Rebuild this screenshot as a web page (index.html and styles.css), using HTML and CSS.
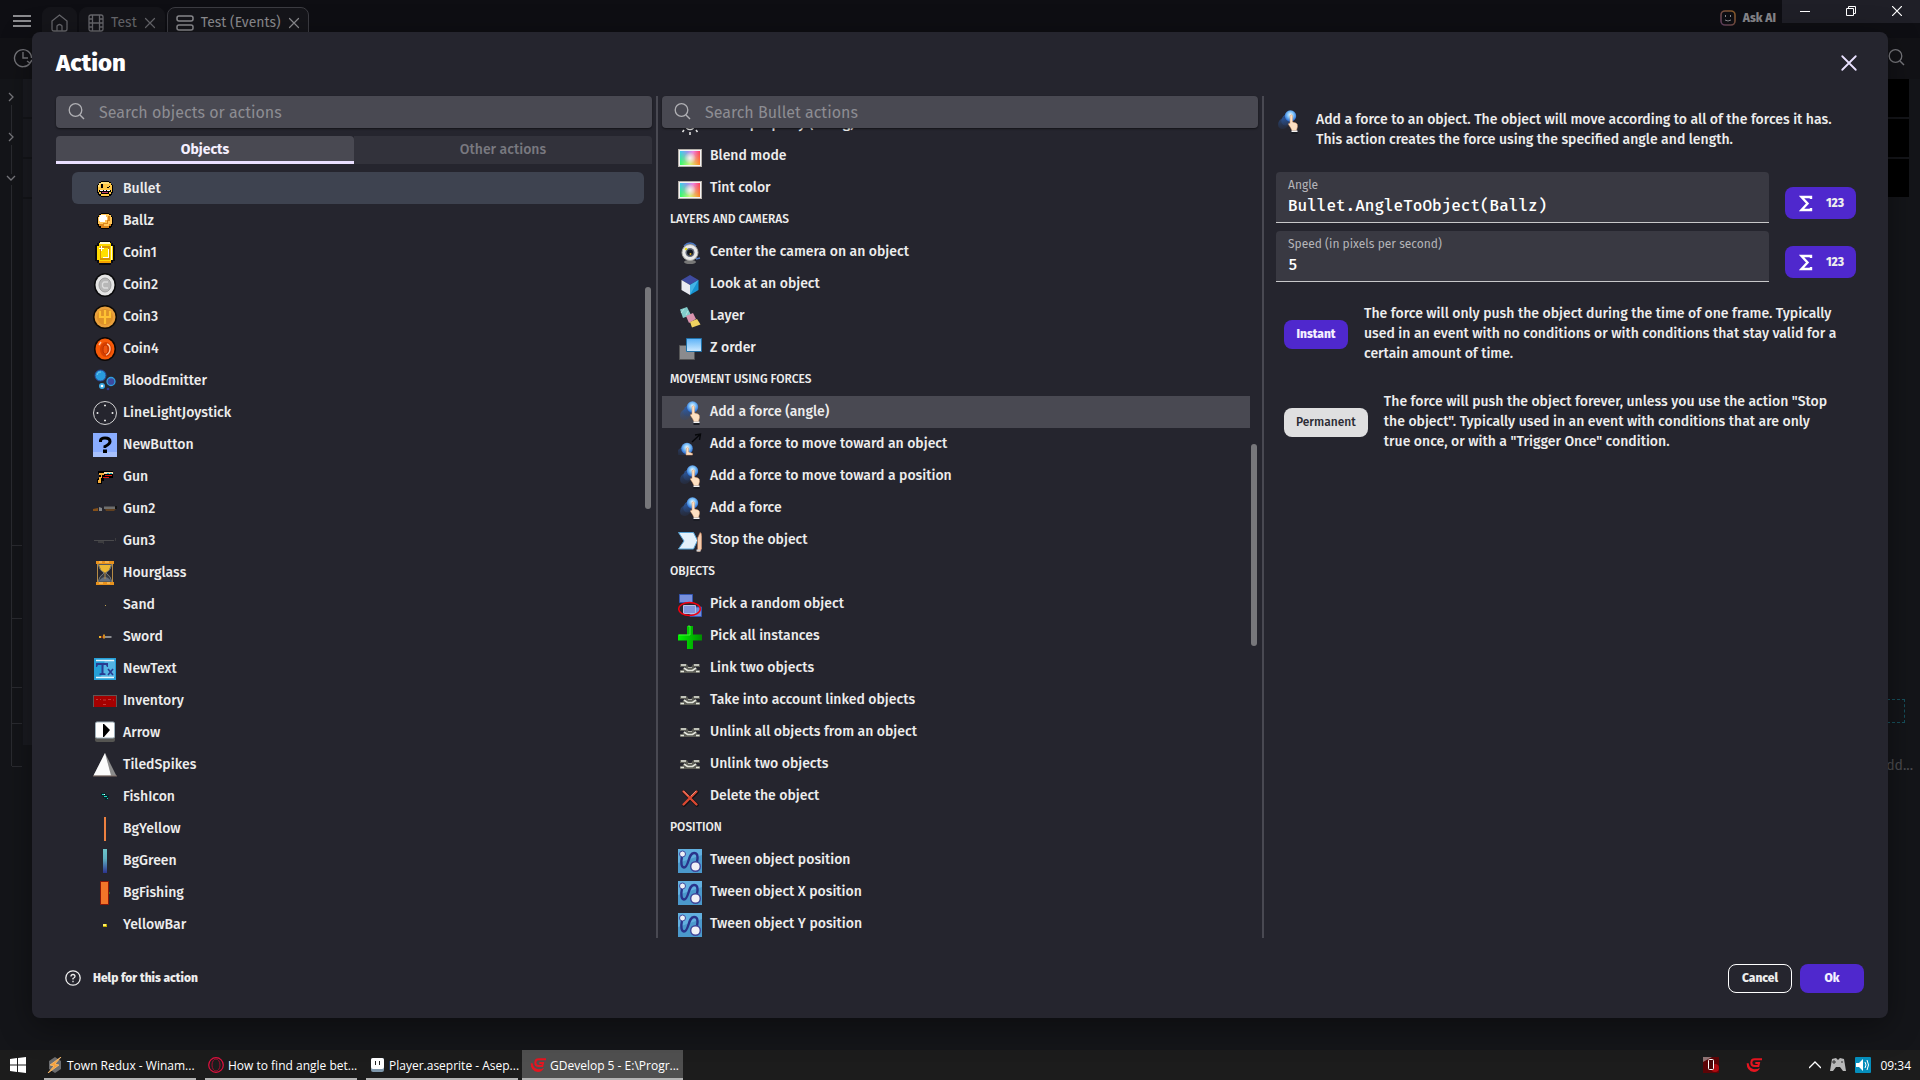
FILE: index.html
```html
<!DOCTYPE html>
<html lang="en">
<head>
  <meta charset="UTF-8" />
  <title>GDevelop 5 - Action</title>
  <link rel="stylesheet" href="styles.css">
</head>
<body>

  <!-- shared icons -->
  <svg class="sprites" aria-hidden="true">
    <defs>
      <radialGradient id="ball" cx="50%" cy="40%" r="60%"><stop offset="0" stop-color="#f2fbff"/><stop offset=".45" stop-color="#7fc2f8"/><stop offset="1" stop-color="#1f62cf"/></radialGradient>
      <linearGradient id="trail" x1="0" y1="1" x2="1" y2="0"><stop offset="0" stop-color="#27406e" stop-opacity=".2"/><stop offset="1" stop-color="#2f68be"/></linearGradient>
      <linearGradient id="hue"><stop offset="0" stop-color="#3fc8ff"/><stop offset=".35" stop-color="#8d8cff"/><stop offset=".65" stop-color="#f077f5"/><stop offset="1" stop-color="#ff3560"/></linearGradient>
      <linearGradient id="hue2"><stop offset="0" stop-color="#2dff5a"/><stop offset=".5" stop-color="#d5ff70"/><stop offset="1" stop-color="#ff8a1f"/></linearGradient>
      <linearGradient id="fade" x1="0" y1="0" x2="0" y2="1"><stop offset=".2" stop-color="#000"/><stop offset=".85" stop-color="#fff"/></linearGradient>
      <mask id="hueMask"><rect width="24" height="24" fill="url(#fade)"/></mask>
      <radialGradient id="glow"><stop offset="0" stop-color="#fff" stop-opacity=".8"/><stop offset="1" stop-color="#fff" stop-opacity="0"/></radialGradient>
      <linearGradient id="green"><stop offset="0" stop-color="#00f400"/><stop offset="1" stop-color="#008c00"/></linearGradient>
      <linearGradient id="sky" x1="0" y1="0" x2="0" y2="1"><stop offset="0" stop-color="#5cb2f7"/><stop offset="1" stop-color="#d0ebff"/></linearGradient>
      <linearGradient id="sea" x1="0" y1="0" x2="0" y2="1"><stop offset="0" stop-color="#6cc4c8"/><stop offset=".4" stop-color="#5fb0c0"/><stop offset="1" stop-color="#2c338f"/></linearGradient>
      <linearGradient id="aiRing" x1="0" y1="1" x2="1" y2="0"><stop offset="0" stop-color="#5d3e62"/><stop offset="1" stop-color="#8a5a24"/></linearGradient>
    </defs>
    <symbol id="i-search" viewBox="0 0 18 18"><circle cx="7.500" cy="7" r="6.300" fill="none" stroke="currentColor" stroke-width="1.300"/><path d="M12 12l4 4" stroke="currentColor" stroke-width="1.400"/></symbol>
    <symbol id="i-close" viewBox="0 0 16 16"><path d="M2 2l12 12M14 2L2 14" stroke="currentColor" stroke-width="1.600" stroke-linecap="round"/></symbol>
    <symbol id="i-force" viewBox="0 0 24 24"><ellipse cx="7.500" cy="13.500" rx="6" ry="5" fill="url(#trail)" opacity=".6" transform="rotate(-50 7.500 13.500)"/><ellipse cx="11" cy="9.500" rx="6.500" ry="5" fill="url(#trail)" transform="rotate(-50 11 9.500)"/><circle cx="14.500" cy="6" r="5.700" fill="url(#ball)"/><path d="M14 5.500q1.500-1.500 2.500 0V12l3.500 1q1.800.8 1.500 3.500l-1 4h-4.500l-1.500-3-2-3q0-2 1.500-1z" fill="#fde0c2" stroke="#d99a6c" stroke-width=".5"/><path d="M15.500 20.500h6V22h-6z" fill="#f2f2f2"/><path d="M15.500 22h6v2h-6z" fill="#1b1d24"/></symbol>
    <symbol id="i-toward" viewBox="0 0 24 24"><path d="M0 22v-5l5-4 8 7v2z" fill="url(#trail)"/><circle cx="9" cy="15.500" r="5.800" fill="url(#ball)"/><path d="M8.500 15q1-1.200 2 0v4l4 1.500V22H8z" fill="#fde0c2" stroke="#d99a6c" stroke-width=".5"/><path d="M14 9L22 1.500M17 2l5.500-1-1 6" fill="none" stroke="#06070a" stroke-width="1.400"/></symbol>
    <symbol id="i-stop" viewBox="0 0 24 24"><path d="M.5 3.500h15l4 8-4 8.500H.5l5.500-8z" fill="#e3f1fa" stroke="#55a1d2"/><path d="M19.500 20V9l2.500-5.500q1.800 0 1.800 4v12l-1.800 3h-2.500z" fill="#f6cbaa" stroke="#9c6141" stroke-width=".6"/><path d="M18.500 20.500h4v2h-4z" fill="#d5d5d5"/></symbol>
    <symbol id="i-color" viewBox="0 0 24 24"><rect x=".5" y="4.500" width="23" height="17" fill="#f3f3f3" stroke="#b5b0aa"/><rect x="2" y="6" width="20" height="14" fill="url(#hue)"/><rect x="2" y="6" width="20" height="14" fill="url(#hue2)" mask="url(#hueMask)"/><circle cx="12" cy="13" r="6" fill="url(#glow)"/></symbol>
    <symbol id="i-link" viewBox="0 0 24 24"><path d="M2 8.500h6l2 3h4l2-3h6M2 14.500h5M17 14.500h5M5 12l4 2.500h6l4-2.500" fill="none" stroke="#5b5c55" stroke-width="3"/><path d="M3 8h5M16 8h5M2.500 14.500H6M18 14.500h3.500M6 11l3.500 2.500h5L18 11" fill="none" stroke="#e3e5db" stroke-width="1.700"/><path d="M10 10.500h4" stroke="#b4b5a9"/></symbol>
    <symbol id="i-tween" viewBox="0 0 24 24"><path d="M0 0h24v24H0z" fill="#62b0e0"/><path d="M0 24V14L24 6v18z" fill="#4b99cc"/><path d="M4 7q-2 11 2 11.500C11 18.500 10 4 16 4q5 0 3 9" fill="none" stroke="#29338a" stroke-width="2.400"/><circle cx="4.500" cy="5" r="3" fill="#eef0f6" stroke="#3a489d"/><circle cx="17.500" cy="17.500" r="4.800" fill="#f0f1f6" stroke="#3d4599" stroke-width="1.400"/></symbol>
    <symbol id="i-gd" viewBox="0 0 24 24"><path d="M24 3.500H13q-5 0-5 5t5 5h5.500l1-4.500H14" fill="none" stroke="currentColor" stroke-width="3"/><path d="M1 9.500h3q1 8 8 9 6 0 9-2.500-3 6.500-9 6.500Q1 21.500 1 9.500z" fill="currentColor"/></symbol>
  </svg>

  <div class="app">
    <header class="titlebar">
      <button class="menu-btn" aria-label="Menu"><svg width="18" height="14" viewBox="0 0 18 14"><path d="M0 2h18M0 7h18M0 12h18" stroke="currentColor" stroke-width="2"/></svg></button>
      <nav class="tabs">
        <a href="#home" class="tab tab-home" aria-label="Home"><svg width="17" height="18" viewBox="0 0 17 18"><path d="M1 7l7.500-6L16 7v8q0 2-2 2H3q-2 0-2-2zM6 17v-5q2.500-3 5 0v5" fill="none" stroke="currentColor" stroke-width="1.300"/></svg></a>
        <a href="#test" class="tab"><svg width="16" height="18" viewBox="0 0 16 18"><path d="M1 3q0-2 2-2h10q2 0 2 2v12q0 2-2 2H3q-2 0-2-2zM4.500 1v16M11.500 1v16M4.500 9h7M1 5h3.500M1 9h3.500M1 13h3.500M11.500 5H15M11.500 9H15M11.500 13H15" fill="none" stroke="currentColor" stroke-width="1.300"/></svg>Test <svg width="12" height="12"><use href="#i-close"/></svg></a>
        <a href="#events" class="tab active"><svg width="18" height="16" viewBox="0 0 18 16"><rect x="1" y="1" width="16" height="5" rx="2" fill="none" stroke="currentColor" stroke-width="1.500"/><rect x="1" y="10" width="16" height="5" rx="2" fill="none" stroke="currentColor" stroke-width="1.500"/></svg>Test (Events) <svg width="12" height="12"><use href="#i-close"/></svg></a>
      </nav>
      <button class="ask-ai"><svg width="16" height="16" viewBox="0 0 16 16"><rect x="1" y="1" width="14" height="14" rx="4" fill="none" stroke="url(#aiRing)" stroke-width="1.600"/><path d="M5.500 5v2M10.500 5v2M5 10q3 2 6 0" fill="none" stroke="#8a8a90"/></svg>Ask AI</button>
      <div class="window-buttons">
        <button aria-label="Minimize"><svg width="10" height="10"><path d="M0 5.500h10" stroke="#fff"/></svg></button>
        <button aria-label="Restore"><svg width="10" height="10"><path d="M.5 2.500h7v7h-7zM2.500 2.500v-2h7v7h-2" fill="none" stroke="#fff"/></svg></button>
        <button aria-label="Close window"><svg width="10" height="10"><path d="M0 0l10 10M10 0L0 10" stroke="#fff" stroke-width="1.200"/></svg></button>
      </div>
    </header>
    <div class="toolbar">
      <svg width="20" height="20" viewBox="0 0 20 20"><path d="M17 15a8.500 8.500 0 1 1 1.500-5M10 4v6h5M14 13l3 2 2-3" fill="none" stroke="currentColor" stroke-width="1.400"/></svg>
      <svg width="18" height="18"><use href="#i-search"/></svg>
    </div>
    <div class="events-sheet">
      <svg class="event-tree" width="23" height="700" viewBox="0 0 23 700" fill="none">
        <path d="M11.500 26v29M11.500 66v29M11.500 106v581M12 466.500h10M12 539.500h10M12 608.500h10M12 644.500h10M12 687.500h10" stroke="#2a2b30"/>
        <path d="M9 14l4 4-4 4M9 54l4 4-4 4M7 97l4 4 4-4" stroke="#77777c" stroke-width="1.300"/>
      </svg>
      <div class="event-blocks"><div></div><div></div><div></div><div></div></div>
      <div class="event-actions">
        <div class="black"></div><div class="black"></div><div class="black"></div>
        <div class="dashed"></div>
        <span>dd...</span>
      </div>
    </div>

    <section class="dialog" role="dialog" aria-labelledby="dialogTitle">
      <div class="dialog-head">
        <h1 id="dialogTitle">Action</h1>
        <button class="dialog-close" aria-label="Close"><svg width="18" height="18"><use href="#i-close"/></svg></button>
      </div>

      <div class="columns">
        <div class="column objects-column">
          <label class="search"><svg width="18" height="18"><use href="#i-search"/></svg><input type="text" placeholder="Search objects or actions" aria-label="Search objects or actions"></label>
          <div class="switch">
            <button class="active">Objects</button>
            <button>Other actions</button>
          </div>
          <div class="scroll-area">
            <ul class="object-list">
              <li><button class="row selected"><svg viewBox="0 0 24 24" shape-rendering="crispEdges"><path d="M8 4h8v1h2v2h1v1h1v8h-1v2h-1v1h-2v1H8v-1H6v-1H5v-2H4V8h1V7h1V5h2z" fill="#000"/><path d="M8 5h8v1h2v2h1v7h-1v2h-2v2H8v-2H6v-2H5V8h1V6h2z" fill="#ffc846"/><path d="M8 5h8v2H7v3H5V8h1V6h2z" fill="#ffdf7b"/><path d="M8 7h2v4H8zM14 10h2v1h-2zM16 9h1v1h-1zM6 13h12v2h-2v2H8v-2H6z" fill="#000"/><path d="M7 13h3v1H7zM11 13h2v1h-2zM14 13h3v1h-3z" fill="#fff"/><path d="M9 15h6v1H9z" fill="#c33d70"/></svg>Bullet</button></li>
              <li><button class="row"><svg viewBox="0 0 24 24" shape-rendering="crispEdges"><path d="M8 4h8v1h2v2h1v1h1v8h-1v2h-1v1h-2v1H8v-1H6v-1H5v-2H4V8h1V7h1V5h2z" fill="#000"/><path d="M8 5h8v1h2v2h1v7h-1v2h-2v2H8v-2H6v-2H5V8h1V6h2z" fill="#ffc558"/><path d="M15 7h2v5h-2v3h-4v2h5v-2h2v2h-2v2H8v-2H6v-2h4v-1h4v-3h1z" fill="#d9841c"/><path d="M7 6h6v2h1v3h-2v2H7v-1H6V8h1z" fill="#fff"/></svg>Ballz</button></li>
              <li><button class="row"><svg viewBox="0 0 24 24" shape-rendering="crispEdges"><path d="M6 0h12v2h2v2h2v16h-2v2h-2v2H6v-2H4v-2H2V4h2V2h2z" fill="#0b0b10"/><path d="M6 2h12v3h2v14h-2v3H6v-3H4V5h2z" fill="#ffd900"/><path d="M7 1h10v2H7zM18 5h1v14h-1z" fill="#fff9d0"/><path d="M7 5h10v14H7z" fill="#d89500"/><path d="M8 7h7v10H8z" fill="#ffe000"/><path d="M15 8h1v9h-6v-1h5zM8 5h1v2h2v1H9v2H8V8H6V7h2z" fill="#fff"/><path d="M6 20h12v2H6z" fill="#f5a000"/></svg>Coin1</button></li>
              <li><button class="row"><svg viewBox="0 0 24 24"><ellipse cx="12" cy="12" rx="11" ry="12" fill="#09090b"/><ellipse cx="12" cy="12" rx="9.500" ry="10.500" fill="#e5e5e5"/><ellipse cx="12" cy="12" rx="6" ry="7" fill="#b7b7b7" stroke="#a0a0a0"/><path d="M15 9h-4l-1.500 1.500v3L11 15h4" fill="none" stroke="#dcdcdc" stroke-width="1.300"/></svg>Coin2</button></li>
              <li><button class="row"><svg viewBox="0 0 24 24"><circle cx="12" cy="12" r="12" fill="#0c0a07"/><circle cx="12" cy="12" r="10.500" fill="#e9a03c"/><circle cx="12" cy="12" r="8" fill="#de9229"/><path d="M7 6v6h10V6M12 5v14" fill="none" stroke="#ffc233" stroke-width="2.200"/></svg>Coin3</button></li>
              <li><button class="row"><svg viewBox="0 0 24 24"><ellipse cx="12" cy="12" rx="11" ry="12" fill="#0c0705"/><ellipse cx="12" cy="12" rx="9.500" ry="10.500" fill="#f65a08"/><ellipse cx="13" cy="12.500" rx="6" ry="7.500" fill="#d84000"/><path d="M14 7q3 1 3 5t-4 6M8 5L6 8" fill="none" stroke="#ffc3a0" stroke-width="1.400"/><ellipse cx="12.500" cy="12.500" rx="2.500" ry="4.500" fill="#f0550f" stroke="#b83200"/></svg>Coin4</button></li>
              <li><button class="row"><svg viewBox="0 0 24 24"><circle cx="7.500" cy="6.500" r="5.500" fill="#299bdc" stroke="#294696"/><path d="M4 6q1-4 4-3" stroke="#75c8ef" fill="none"/><circle cx="18" cy="12.500" r="4" fill="#3b4a9f" stroke="#2f9ddf" stroke-width="1.300"/><circle cx="9" cy="17" r="3" fill="#3aa6e0"/><circle cx="9" cy="17" r="1.300" fill="#fff"/><circle cx="15" cy="20" r="1.300" fill="#29368e"/></svg>BloodEmitter</button></li>
              <li><button class="row"><svg viewBox="0 0 24 24"><circle cx="12" cy="12" r="11.500" fill="none" stroke="#d2d2d3"/><path d="M11 4.500h2M11 19.500h2M4.500 11v2M19.500 11v2" stroke="#ddd" stroke-width="1.600"/></svg>LineLightJoystick</button></li>
              <li><button class="row"><svg viewBox="0 0 24 24"><path d="M0 0h24v24H0z" fill="#8aadff"/><path d="M0 19h24v5H0z" fill="#a8c1fc"/><path d="M7.500 9V7.500Q8 5 12 5q5 0 5 3.500 0 2.500-5 5V15" fill="none" stroke="#000" stroke-width="3"/><path d="M10 16.500h4V20h-4z" fill="#000"/></svg>NewButton</button></li>
              <li><button class="row"><svg viewBox="0 0 24 24" shape-rendering="crispEdges"><path d="M5 6h15v7h-9v3H9v3H4v-5l2-2z" fill="#000"/><path d="M6 8h5v2H9v3H8v5H5v-3h1v-3h2v-2H6z" fill="#f7ad3a"/><path d="M11 7h9v2h-9z" fill="#f8dba5"/><path d="M14 8h2v1h-2zM17 8h2v1h-2z" fill="#16b8c8"/><path d="M12 10h7v1h-7zM10 12h6v1h-6z" fill="#e31a0d"/></svg>Gun</button></li>
              <li><button class="row"><svg viewBox="0 0 24 24"><path d="M0 12l5-1v3H0z" fill="#865018"/><path d="M6 10l3 1v3H6z" fill="#85888b"/><path d="M11 9.500h11V12H11z" fill="#6e6e6d"/><path d="M12 12h11l-2 2h-8z" fill="#61401f"/><path d="M22 9h2v3h-2z" fill="#111"/></svg>Gun2</button></li>
              <li><button class="row"><svg viewBox="0 0 24 24"><path d="M1 11h20v1H1z" fill="#4a4a4c"/><path d="M5 12h5v2H5zM10 12h1v3h-1zM22 9h1v3h-1z" fill="#3c3c3f"/></svg>Gun3</button></li>
              <li><button class="row"><svg viewBox="0 0 24 24"><path d="M5 3h14q-1 6-6 9 5 3 6 9H5q1-6 6-9-5-3-6-9z" fill="#363c46" stroke="#929690" stroke-width=".7"/><path d="M6 4h12l-2 5-4 3-4-3z" fill="#edb834"/><path d="M6 20q6-8 12 0z" fill="#66707d"/><path d="M4.500 3v18M19.500 3v18M12 12v6" stroke="#b78b44"/><path d="M3 0h18v3H3zM3 21h18v3H3z" fill="#e8921d"/><path d="M6 1h3M12 1h4M6 22h4M14 22h3" stroke="#ffd27c"/></svg>Hourglass</button></li>
              <li><button class="row"><svg viewBox="0 0 24 24"><path d="M12 12h1v1h-1z" fill="#c0a050"/></svg>Sand</button></li>
              <li><button class="row"><svg viewBox="0 0 24 24"><path d="M6 11h2v2H6z" fill="#efb42a"/><path d="M8 11h2v2H8z" fill="#7b311a"/><path d="M10 9.500h2v4h-2z" fill="#d48d20"/><path d="M12 11h6l1 1-1 1h-6z" fill="#8a8b8e"/></svg>Sword</button></li>
              <li><button class="row"><svg viewBox="0 0 24 24"><path d="M1 1h22v22H1z" fill="#259fd8"/><path d="M12 3h10v17H8z" fill="#54b4e3"/><path d="M3 3.500h18M3 20.500h18" stroke="#e7f5fc" stroke-width="1.500"/><path d="M3 6h12v4h-1l-1-2h-2.500v8l2 .5V18h-6v-1.500l2-.5V8H5l-1 2H3z" fill="#293c91"/><path d="M15 12l5 6M20 12l-5 6" stroke="#293c91" stroke-width="1.600"/></svg>NewText</button></li>
              <li><button class="row"><svg viewBox="0 0 24 24"><path d="M0 6h24v12H0z" fill="#5e5655"/><path d="M1 7h22v11H1z" fill="#a50000"/><path d="M3 10.500h2M7 10.500h1M10 11h3M15 10.500h3M20 11h1M10 15.500h3" stroke="#c03a3a"/></svg>Inventory</button></li>
              <li><button class="row"><svg viewBox="0 0 24 24"><rect x="2" y="2" width="20" height="19" rx="2" fill="#555552"/><rect x="2.500" y="1" width="19" height="16" rx="1.500" fill="#fff" stroke="#9fb0ba"/><path d="M10 3h1l6 6-6 7h-1z" fill="#000"/></svg>Arrow</button></li>
              <li><button class="row"><svg viewBox="0 0 24 24"><path d="M12 0L.5 23h23z" fill="#8b8b8b"/><path d="M12 0L.5 22.500H18z" fill="#fbfbfb"/><path d="M0 23h24" stroke="#806c65"/></svg>TiledSpikes</button></li>
              <li><button class="row"><svg viewBox="0 0 24 24" shape-rendering="crispEdges"><path d="M8 8h5v2h3v2h-1v3h-3v-2h-2v-2H8z" fill="#06262c"/><path d="M9 9h3v1H9zM11 11h3v1h-3zM14 13h1v1h-1z" fill="#21d9bc"/><path d="M11 9h1v1h-1z" fill="#e9ffff"/></svg>FishIcon</button></li>
              <li><button class="row"><svg viewBox="0 0 24 24"><path d="M11 0h2v24h-2z" fill="#ed8140"/></svg>BgYellow</button></li>
              <li><button class="row"><svg viewBox="0 0 24 24"><path d="M10 0h4v24h-4z" fill="url(#sea)"/></svg>BgGreen</button></li>
              <li><button class="row"><svg viewBox="0 0 24 24"><path d="M7.500.5h8v23h-8z" fill="#f37529" stroke="#8c1607"/><path d="M16 11h1v2h-1z" fill="#386c1d"/></svg>BgFishing</button></li>
              <li><button class="row"><svg viewBox="0 0 24 24"><path d="M10 11h4v3h-4z" fill="#c4ad00"/><path d="M10 11h3v2h-3z" fill="#fff263"/></svg>YellowBar</button></li>
            </ul>
            <div class="thumb thumb-objects"></div>
          </div>
        </div>

        <div class="column actions-column">
          <label class="search"><svg width="18" height="18"><use href="#i-search"/></svg><input type="text" placeholder="Search Bullet actions" aria-label="Search Bullet actions"></label>
          <div class="scroll-area">
            <div class="action-list">
              <button class="row"><svg viewBox="0 0 24 24"><circle cx="12" cy="12" r="4.500" fill="none" stroke="#e8e8e8" stroke-width="1.500"/><path d="M12 19v3M6 17l-1.500 2M18 17l1.500 2M12 2v3M2 12h3M19 12h3" stroke="#e8e8e8" stroke-width="1.500"/></svg>Effect property (string)</button>
              <button class="row"><svg><use href="#i-color"/></svg>Blend mode</button>
              <button class="row"><svg><use href="#i-color"/></svg>Tint color</button>
              <h2>Layers and cameras</h2>
              <button class="row"><svg viewBox="0 0 24 24"><ellipse cx="12" cy="21" rx="6" ry="2" fill="#777"/><path d="M18 18l4-1M6 5q6-6 12 0" fill="none" stroke="#4a78c4" stroke-width="1.500"/><circle cx="12" cy="11.500" r="8" fill="#e9e9e8" stroke="#a8a8a4"/><circle cx="12" cy="11.500" r="4.500" fill="#606776"/><circle cx="12" cy="11.500" r="3" fill="#121722"/><circle cx="12.500" cy="13" r="1" fill="#d1a41a"/><circle cx="8" cy="8" r="1.300" fill="#e7dc21"/></svg>Center the camera on an object</button>
              <button class="row"><svg viewBox="0 0 24 24"><path d="M12 2l8.500 5-8.500 5-8.500-5z" fill="#3f4ba0"/><path d="M3.500 7l8.500 5v10l-8.500-5z" fill="#e8eaf1"/><path d="M20.500 7L12 12v10l8.500-5z" fill="#1693d1"/><path d="M20.500 7L12 12v10z" fill="#44b4e6"/></svg>Look at an object</button>
              <button class="row"><svg viewBox="0 0 24 24"><path d="M2 4.500L9 2l4 8-8 3z" fill="#82cccb"/><path d="M8 11l7-3 3 6-7 4z" fill="#da93ae"/><path d="M12 17l7-3 3.500 5.500-8.500 3z" fill="#efd260"/><path d="M3 8l3-4M8 10l2-4" stroke="#b6e5df"/></svg>Layer</button>
              <button class="row"><svg viewBox="0 0 24 24"><path d="M1.500 8.500h15v14h-15z" fill="#8b8b8e" stroke="#565657"/><path d="M8.500 1.500h15v13h-15z" fill="url(#sky)" stroke="#2071a9"/></svg>Z order</button>
              <h2>Movement using forces</h2>
              <button class="row selected"><svg><use href="#i-force"/></svg>Add a force (angle)</button>
              <button class="row"><svg><use href="#i-toward"/></svg>Add a force to move toward an object</button>
              <button class="row"><svg><use href="#i-force"/></svg>Add a force to move toward a position</button>
              <button class="row"><svg><use href="#i-force"/></svg>Add a force</button>
              <button class="row"><svg><use href="#i-stop"/></svg>Stop the object</button>
              <h2>Objects</h2>
              <button class="row"><svg viewBox="0 0 24 24"><path d="M1.500 1.500h13v8h-13z" fill="#7890dc" stroke="#3557b2"/><path d="M12 14h11.500v9.500H12z" fill="#7290db" stroke="#3557b2"/><path d="M5.500 12.500h12v8h-12z" fill="#8296dc" stroke="#b4bfe7"/><ellipse cx="11.500" cy="16" rx="10.800" ry="6.500" fill="none" stroke="#f3000f" stroke-width="1.500"/></svg>Pick a random object</button>
              <button class="row"><svg viewBox="0 0 24 24"><path d="M9 1h6v8.500h9v6h-9V24H9v-8.500H0v-6h9z" fill="url(#green)"/><path d="M10 1h2v9H1" fill="none" stroke="#5dff4b" stroke-width=".7"/></svg>Pick all instances</button>
              <button class="row"><svg><use href="#i-link"/></svg>Link two objects</button>
              <button class="row"><svg><use href="#i-link"/></svg>Take into account linked objects</button>
              <button class="row"><svg><use href="#i-link"/></svg>Unlink all objects from an object</button>
              <button class="row"><svg><use href="#i-link"/></svg>Unlink two objects</button>
              <button class="row"><svg viewBox="0 0 24 24"><path d="M6 7l13 13M19 7L6 20" stroke="#0f1013" stroke-width="3.500" stroke-linecap="round"/><path d="M5.500 6.500l13 13M18.500 6.500l-13 13" stroke="#d94832" stroke-width="2.400" stroke-linecap="round"/><path d="M5.500 6l5 5M18 6l-5 5" stroke="#f6a08a" stroke-width=".8"/></svg>Delete the object</button>
              <h2>Position</h2>
              <button class="row"><svg><use href="#i-tween"/></svg>Tween object position</button>
              <button class="row"><svg><use href="#i-tween"/></svg>Tween object X position</button>
              <button class="row"><svg><use href="#i-tween"/></svg>Tween object Y position</button>
            </div>
            <div class="thumb thumb-actions"></div>
          </div>
        </div>

        <form class="parameters">
          <div class="description">
            <svg width="24" height="24"><use href="#i-force"/></svg>
            <p>Add a force to an object. The object will move according to all of the forces it has.<br>This action creates the force using the specified angle and length.</p>
          </div>
          <div class="param">
            <div class="field">
              <label for="angle">Angle</label>
              <input id="angle" type="text" value="Bullet.AngleToObject(Ballz)">
            </div>
            <button type="button" class="expression"><svg width="14" height="17" viewBox="0 0 14 17"><path d="M12 4V2H2.500l6 6.500-6 6.500H12v-2" fill="none" stroke="#fff" stroke-width="2.400"/></svg>123</button>
          </div>
          <div class="param">
            <div class="field">
              <label for="speed">Speed (in pixels per second)</label>
              <input id="speed" type="text" value="5">
            </div>
            <button type="button" class="expression"><svg width="14" height="17" viewBox="0 0 14 17"><path d="M12 4V2H2.500l6 6.500-6 6.500H12v-2" fill="none" stroke="#fff" stroke-width="2.400"/></svg>123</button>
          </div>
          <div class="force-type">
            <button type="button" class="btn primary">Instant</button>
            <p>The force will only push the object during the time of one frame. Typically<br>used in an event with no conditions or with conditions that stay valid for a<br>certain amount of time.</p>
          </div>
          <div class="force-type">
            <button type="button" class="btn light">Permanent</button>
            <p>The force will push the object forever, unless you use the action "Stop<br>the object". Typically used in an event with conditions that are only<br>true once, or with a "Trigger Once" condition.</p>
          </div>
        </form>
      </div>

      <div class="dialog-foot">
        <a class="help" href="#help"><svg width="16" height="16" viewBox="0 0 16 16"><circle cx="8" cy="8" r="7.200" fill="none" stroke="currentColor" stroke-width="1.300"/><path d="M6 6.500Q6 4.500 8 4.500t2 2Q10 7.500 8 8.500v1M8 10.800v1.400" fill="none" stroke="currentColor" stroke-width="1.300"/></svg>Help for this action</a>
        <button class="btn outline">Cancel</button>
        <button class="btn primary">Ok</button>
      </div>
    </section>
  </div>

  <footer class="taskbar">
    <button class="start" aria-label="Start"><svg width="16" height="16" viewBox="0 0 16 16"><path d="M0 2l7-1v6.500H0zM8 1l8-1v7.500H8zM0 8.500h7V15l-7-1zM8 8.500h8V16l-8-1z" fill="#fff"/></svg></button>
    <button class="task"><svg width="16" height="16" viewBox="0 0 16 16"><path d="M8 0l6 4v8l-6 4-6-4V4z" fill="#6d6e70"/><path d="M14 0L3 8l4 1-6 7 11-8-4-1z" fill="#f8a23c" stroke="#ffc070" stroke-width=".8"/></svg>Town Redux - Winam...</button>
    <button class="task"><svg width="16" height="16" viewBox="0 0 16 16"><circle cx="8" cy="8" r="7.300" fill="none" stroke="#e0113f" stroke-width="1.200"/><ellipse cx="8" cy="8" rx="4" ry="6" fill="none" stroke="#a00d30"/></svg>How to find angle bet...</button>
    <button class="task"><svg width="16" height="16" viewBox="0 0 16 16"><rect x="2" y="1" width="13" height="14" rx="2" fill="#7e97ab"/><rect x="2" y="1" width="13" height="11" rx="2" fill="#fff"/><path d="M6.500 4v4M10.500 4v4" stroke="#222"/></svg>Player.aseprite - Asep...</button>
    <button class="task active"><svg class="gd" width="16" height="16"><use href="#i-gd"/></svg>GDevelop 5 - E:\Progr...</button>
    <div class="tray">
      <svg width="16" height="16" viewBox="0 0 16 16"><path d="M0 0h16v16H0z" fill="#5c0406"/><path d="M0 0h9L0 5z" fill="#8f7474"/><circle cx="12" cy="11" r="4" fill="#b00a10"/><rect x="5.500" y="2.500" width="5" height="10" rx="1" fill="#4b0507" stroke="#fff"/></svg>
      <svg class="gd" width="16" height="16"><use href="#i-gd"/></svg>
      <svg width="12" height="8" viewBox="0 0 12 8"><path d="M0 7l6-6 6 6" fill="none" stroke="#fff" stroke-width="1.300"/></svg>
      <svg width="16" height="14" viewBox="0 0 16 14"><path d="M2 1l4-1 2 2 2-2 4 1 2 12h-3l-3-4H6l-3 4H0z" fill="#b8b8b8"/><path d="M4 2v4M2 4h4M11 4h2" stroke="#333"/></svg>
      <svg width="16" height="16" viewBox="0 0 16 16"><rect width="16" height="16" rx="1" fill="#058ebc"/><path d="M1 6h3l4-4v12l-4-4H1z" fill="#fff"/><path d="M10 5q2 3 0 6M12 3q3 5 0 10" fill="none" stroke="#fff"/></svg>
      <time>09:34</time>
    </div>
  </footer>

</body>
</html>
```
FILE: styles.css
```css
* {
  box-sizing: border-box;
}
body {
  margin: 0;
  height: 100vh;
  display: flex;
  flex-direction: column;
  overflow: hidden;
  background: #141519;
  color: #ededed;
  font-family: "Fira Sans", "Noto Sans", sans-serif;
  font-size: 14px;
}
h1, h2, p, ul {
  margin: 0;
  padding: 0;
}
ul {
  list-style: none;
}
button, input {
  font: inherit;
  color: inherit;
  border: 0;
  margin: 0;
  padding: 0;
  background: none;
}
a {
  color: inherit;
  text-decoration: none;
}
svg {
  flex: none;
  display: block;
}
.sprites {
  position: absolute;
  width: 0;
  height: 0;
}

/* editor behind the dialog */
.app {
  flex: 1;
  min-height: 0;
  position: relative;
  display: flex;
  flex-direction: column;
}
.titlebar {
  height: 38px;
  display: flex;
  align-items: flex-start;
  background: #0e0e13;
  color: #8b8b8f;
}
.menu-btn {
  padding: 14px 11px 0 13px;
}
.tabs {
  flex: 1;
  display: flex;
  gap: 2px;
  padding-top: 7px;
  color: #66666b;
}
.tab {
  height: 31px;
  padding: 0 8px;
  display: flex;
  align-items: center;
  gap: 7px;
  border: 1px solid #15151a;
  border-radius: 8px 8px 0 0;
  background: #15151a;
}
.tab.active {
  border-color: #3c3c42;
  color: #8b8b8f;
}
.ask-ai {
  display: flex;
  align-items: center;
  gap: 7px;
  padding: 10px 6px 0 0;
  font-size: 12px;
  font-weight: 800;
  color: #85858a;
}
.window-buttons {
  display: flex;
  background: #1f1f27;
}
.window-buttons button {
  width: 46px;
  height: 23px;
  padding-bottom: 1px;
  display: flex;
  align-items: center;
  justify-content: center;
}
.toolbar {
  height: 41px;
  padding: 0 14px 2px 13px;
  display: flex;
  align-items: center;
  justify-content: space-between;
  background: #121216;
  color: #77777c;
}
.events-sheet {
  flex: 1;
  display: flex;
}
.event-blocks {
  flex: 1;
  display: flex;
  flex-direction: column;
  gap: 2px;
}
.event-blocks div {
  height: 38px;
  background: #1a1b21;
}
.event-blocks div:last-child {
  height: 546px;
}
.event-actions {
  width: 48px;
  padding-right: 11px;
  display: flex;
  flex-direction: column;
  gap: 2px;
  color: #4c4c50;
}
.black {
  height: 38px;
  background: #000;
}
.dashed {
  height: 24px;
  margin: 500px 4px 32px 0;
  border: 1px dashed #17505c;
}
.event-actions span {
  margin-right: -4px;
  text-align: right;
}

/* dialog */
.dialog {
  position: absolute;
  inset: 32px;
  padding: 0 24px;
  display: flex;
  flex-direction: column;
  border-radius: 8px;
  background: #25252e;
  box-shadow: 0 8px 32px rgba(0, 0, 0, 0.4);
}
.dialog-head {
  height: 64px;
  padding: 0 6px 2px 0;
  display: flex;
  align-items: center;
  justify-content: space-between;
}
.dialog-head h1 {
  font-size: 24px;
  font-weight: 800;
  color: #fff;
}
.dialog-close {
  color: #e9e1ff;
}
.columns {
  flex: 1;
  min-height: 0;
  display: grid;
  grid-template-columns: 301fr 303fr 300fr;
}
.column {
  min-height: 0;
  display: flex;
  flex-direction: column;
  padding-right: 4px;
  border-right: 2px solid #494952;
}
.actions-column {
  padding-left: 4px;
}
.search {
  height: 32px;
  flex: none;
  padding-left: 12px;
  display: flex;
  align-items: center;
  gap: 13px;
  border-radius: 4px;
  background: #494952;
  color: #b0b0b4;
  box-shadow: 0 1px 2px rgba(0, 0, 0, 0.5);
  z-index: 1;
}
.search input {
  flex: 1;
  font-size: 16px;
  outline: none;
}
.search input::placeholder {
  color: #8d8d93;
}
.switch {
  display: flex;
  margin: 8px 0;
}
.switch button {
  flex: 1;
  height: 28px;
  padding-top: 2px;
  background: #32323b;
  border-bottom: 3px solid #32323b;
  border-radius: 0 4px 0 0;
  font-weight: 500;
  color: #797980;
}
.switch .active {
  border-radius: 4px 4px 0 0;
  border-color: #e9dfff;
  background: #494952;
  color: #f5f0ff;
  font-weight: 700;
}
.scroll-area {
  flex: 1;
  min-height: 0;
  overflow: hidden;
  position: relative;
  padding-right: 8px;
}
.thumb {
  position: absolute;
  right: 1px;
  width: 6px;
  border-radius: 3px;
  background: #77777b;
}
.thumb-objects {
  top: 15%;
  height: 29%;
}
.thumb-actions {
  top: 39%;
  height: 25%;
}
.row {
  width: 100%;
  height: 32px;
  display: flex;
  align-items: center;
  text-align: left;
  font-weight: 500;
  white-space: nowrap;
}
.row svg {
  width: 24px;
  height: 24px;
  margin-top: 2px;
}
.object-list {
  padding-left: 16px;
}
.object-list .row {
  gap: 6px;
  padding-left: 21px;
  border-radius: 6px;
}
.object-list .selected {
  background: #3e4350;
}
/* list is scrolled part way into its first row */
.action-list {
  margin-top: -20px;
}
.action-list .row {
  gap: 8px;
  padding: 0 16px 2px;
}
.action-list .row svg {
  margin-top: 4px;
}
.action-list .selected {
  background: #494952;
}
.action-list h2 {
  height: 32px;
  padding-left: 8px;
  font-size: 12px;
  line-height: 30px;
  font-weight: 500;
  text-transform: uppercase;
}

/* parameters */
.parameters {
  padding: 14px 8px 0 12px;
  font-weight: 500;
  line-height: 20px;
  white-space: nowrap;
}
.description {
  display: flex;
  gap: 16px;
  margin-bottom: 22px;
}
.param {
  display: flex;
  align-items: center;
  gap: 16px;
  margin-bottom: 8px;
}
.field {
  flex: 1;
  height: 51px;
  padding: 4px 12px 0;
  display: flex;
  flex-direction: column;
  border-bottom: 1px solid #c8c8ca;
  border-radius: 4px 4px 0 0;
  background: #393942;
}
.field label {
  font-size: 12px;
  line-height: 18px;
  font-weight: 400;
  color: #b5b5b9;
}
.field input {
  height: 22px;
  font-family: "Fira Mono", "DejaVu Sans Mono", monospace;
  font-size: 16px;
  font-weight: 500;
  color: #fff;
  outline: none;
}
.expression {
  width: 71px;
  height: 32px;
  margin-top: 11px;
  padding-left: 2px;
  display: flex;
  align-items: center;
  justify-content: center;
  gap: 13px;
  border-radius: 8px;
  background: #4f28cd;
  font-size: 12px;
  font-weight: 800;
}
.force-type {
  display: flex;
  align-items: center;
  gap: 16px;
  margin: 22px 0 28px 8px;
}
.btn {
  height: 29px;
  min-width: 64px;
  padding: 0 10px;
  border-radius: 8px;
  font-size: 12px;
  font-weight: 800;
}
.primary {
  background: #4f28cd;
  color: #f4f0ff;
}
.light {
  padding: 0 12px;
  background: #dfdfe0;
  color: #2b2b33;
  font-weight: 500;
}
.outline {
  border: 1px solid #fff;
}
.dialog-foot {
  height: 80px;
  flex: none;
  display: flex;
  align-items: center;
  gap: 8px;
}
.help {
  flex: 1;
  display: flex;
  align-items: center;
  gap: 12px;
  padding-left: 9px;
  font-size: 12px;
  font-weight: 800;
}

/* taskbar */
.taskbar {
  height: 30px;
  flex: none;
  display: flex;
  background: #1c1c1c;
  color: #fff;
  font-family: "Segoe UI", "Open Sans", sans-serif;
  font-size: 12px;
}
.start {
  width: 39px;
  padding-left: 10px;
}
.task {
  width: 161px;
  padding: 0 8px;
  display: flex;
  align-items: center;
  gap: 4px;
  white-space: nowrap;
  background: linear-gradient(#b4b4b4, #b4b4b4) center bottom / 152px 2px no-repeat;
}
.task.active {
  background-color: #4f4f4f;
  background-size: 100% 2px;
}
.gd {
  color: #e51520;
}
.tray {
  margin-left: auto;
  padding-right: 9px;
  display: flex;
  align-items: center;
  gap: 9px;
}
.tray svg:first-child {
  margin-right: 18px;
}
.tray .gd {
  margin-right: 38px;
}
```
